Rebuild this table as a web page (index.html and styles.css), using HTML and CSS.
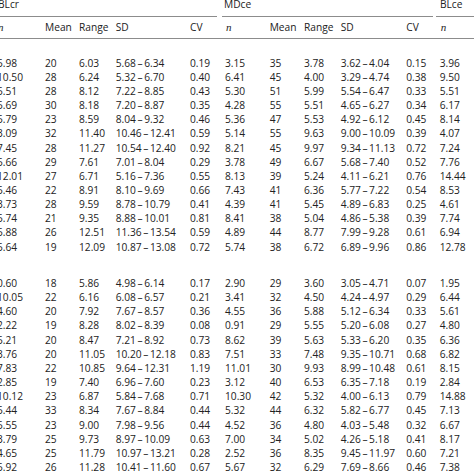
FILE: index.html
```html
<!DOCTYPE html>
<html>
<head>
<meta charset="utf-8">
<link rel="stylesheet" href="styles.css">
</head>
<body>
<div class="table">
  <div class="groups">
    <span class="g g1">BLcr</span>
    <span class="g g2">MDce</span>
    <span class="g g3">BLce</span>
  </div>
  <div class="row heads">
    <span class="it">n</span><span>Mean</span><span>Range</span><span>SD</span><span>CV</span>
    <span class="it">n</span><span>Mean</span><span>Range</span><span>SD</span><span>CV</span>
    <span class="it">n</span>
  </div>
  <div class="body b1">
    <div class="row"><span>5.98</span><span>20</span><span>6.03</span><span>5.68<i>–</i>6.34</span><span>0.19</span><span>3.15</span><span>35</span><span>3.78</span><span>3.62<i>–</i>4.04</span><span>0.15</span><span>3.96</span></div>
    <div class="row"><span>10.50</span><span>28</span><span>6.24</span><span>5.32<i>–</i>6.70</span><span>0.40</span><span>6.41</span><span>45</span><span>4.00</span><span>3.29<i>–</i>4.74</span><span>0.38</span><span>9.50</span></div>
    <div class="row"><span>5.51</span><span>28</span><span>8.12</span><span>7.22<i>–</i>8.85</span><span>0.43</span><span>5.30</span><span>51</span><span>5.99</span><span>5.54<i>–</i>6.47</span><span>0.33</span><span>5.51</span></div>
    <div class="row"><span>5.69</span><span>30</span><span>8.18</span><span>7.20<i>–</i>8.87</span><span>0.35</span><span>4.28</span><span>55</span><span>5.51</span><span>4.65<i>–</i>6.27</span><span>0.34</span><span>6.17</span></div>
    <div class="row"><span>5.79</span><span>23</span><span>8.59</span><span>8.04<i>–</i>9.32</span><span>0.46</span><span>5.36</span><span>47</span><span>5.53</span><span>4.92<i>–</i>6.12</span><span>0.45</span><span>8.14</span></div>
    <div class="row"><span>3.09</span><span>32</span><span>11.40</span><span>10.46<i>–</i>12.41</span><span>0.59</span><span>5.14</span><span>55</span><span>9.63</span><span>9.00<i>–</i>10.09</span><span>0.39</span><span>4.07</span></div>
    <div class="row"><span>7.45</span><span>28</span><span>11.27</span><span>10.54<i>–</i>12.40</span><span>0.92</span><span>8.21</span><span>45</span><span>9.97</span><span>9.34<i>–</i>11.13</span><span>0.72</span><span>7.24</span></div>
    <div class="row"><span>5.66</span><span>29</span><span>7.61</span><span>7.01<i>–</i>8.04</span><span>0.29</span><span>3.78</span><span>49</span><span>6.67</span><span>5.68<i>–</i>7.40</span><span>0.52</span><span>7.76</span></div>
    <div class="row"><span>12.01</span><span>27</span><span>6.71</span><span>5.16<i>–</i>7.36</span><span>0.55</span><span>8.13</span><span>39</span><span>5.24</span><span>4.11<i>–</i>6.21</span><span>0.76</span><span>14.44</span></div>
    <div class="row"><span>5.46</span><span>22</span><span>8.91</span><span>8.10<i>–</i>9.69</span><span>0.66</span><span>7.43</span><span>41</span><span>6.36</span><span>5.77<i>–</i>7.22</span><span>0.54</span><span>8.53</span></div>
    <div class="row"><span>3.73</span><span>28</span><span>9.59</span><span>8.78<i>–</i>10.79</span><span>0.41</span><span>4.39</span><span>41</span><span>5.45</span><span>4.89<i>–</i>6.83</span><span>0.25</span><span>4.61</span></div>
    <div class="row"><span>5.74</span><span>21</span><span>9.35</span><span>8.88<i>–</i>10.01</span><span>0.81</span><span>8.41</span><span>38</span><span>5.04</span><span>4.86<i>–</i>5.38</span><span>0.39</span><span>7.74</span></div>
    <div class="row"><span>5.88</span><span>26</span><span>12.51</span><span>11.36<i>–</i>13.54</span><span>0.59</span><span>4.89</span><span>44</span><span>8.77</span><span>7.99<i>–</i>9.28</span><span>0.61</span><span>6.94</span></div>
    <div class="row"><span>5.64</span><span>19</span><span>12.09</span><span>10.87<i>–</i>13.08</span><span>0.72</span><span>5.74</span><span>38</span><span>6.72</span><span>6.89<i>–</i>9.96</span><span>0.86</span><span>12.78</span></div>
  </div>
  <div class="body b2">
    <div class="row"><span>0.60</span><span>18</span><span>5.86</span><span>4.98<i>–</i>6.14</span><span>0.17</span><span>2.90</span><span>29</span><span>3.60</span><span>3.05<i>–</i>4.71</span><span>0.07</span><span>1.95</span></div>
    <div class="row"><span>10.05</span><span>22</span><span>6.16</span><span>6.08<i>–</i>6.57</span><span>0.21</span><span>3.41</span><span>32</span><span>4.50</span><span>4.24<i>–</i>4.97</span><span>0.29</span><span>6.44</span></div>
    <div class="row"><span>4.60</span><span>20</span><span>7.92</span><span>7.67<i>–</i>8.57</span><span>0.36</span><span>4.55</span><span>36</span><span>5.88</span><span>5.12<i>–</i>6.34</span><span>0.33</span><span>5.61</span></div>
    <div class="row"><span>2.22</span><span>19</span><span>8.28</span><span>8.02<i>–</i>8.39</span><span>0.08</span><span>0.91</span><span>29</span><span>5.55</span><span>5.20<i>–</i>6.08</span><span>0.27</span><span>4.80</span></div>
    <div class="row"><span>5.21</span><span>20</span><span>8.47</span><span>7.21<i>–</i>8.92</span><span>0.73</span><span>8.62</span><span>39</span><span>5.63</span><span>5.33<i>–</i>6.20</span><span>0.35</span><span>6.36</span></div>
    <div class="row"><span>3.76</span><span>20</span><span>11.05</span><span>10.20<i>–</i>12.18</span><span>0.83</span><span>7.51</span><span>33</span><span>7.48</span><span>9.35<i>–</i>10.71</span><span>0.68</span><span>6.82</span></div>
    <div class="row"><span>7.83</span><span>22</span><span>10.85</span><span>9.64<i>–</i>12.31</span><span>1.19</span><span>11.01</span><span>30</span><span>9.93</span><span>8.99<i>–</i>10.48</span><span>0.61</span><span>8.15</span></div>
    <div class="row"><span>2.85</span><span>19</span><span>7.40</span><span>6.96<i>–</i>7.60</span><span>0.23</span><span>3.12</span><span>40</span><span>6.53</span><span>6.35<i>–</i>7.18</span><span>0.19</span><span>2.84</span></div>
    <div class="row"><span>10.12</span><span>23</span><span>6.87</span><span>5.84<i>–</i>7.68</span><span>0.71</span><span>10.30</span><span>42</span><span>5.32</span><span>4.00<i>–</i>6.13</span><span>0.79</span><span>14.88</span></div>
    <div class="row"><span>5.44</span><span>33</span><span>8.34</span><span>7.67<i>–</i>8.84</span><span>0.44</span><span>5.32</span><span>44</span><span>6.32</span><span>5.82<i>–</i>6.77</span><span>0.45</span><span>7.13</span></div>
    <div class="row"><span>5.55</span><span>23</span><span>9.00</span><span>7.98<i>–</i>9.56</span><span>0.44</span><span>4.52</span><span>36</span><span>4.80</span><span>4.03<i>–</i>5.48</span><span>0.32</span><span>6.67</span></div>
    <div class="row"><span>3.79</span><span>25</span><span>9.73</span><span>8.97<i>–</i>10.09</span><span>0.63</span><span>7.00</span><span>34</span><span>5.02</span><span>4.26<i>–</i>5.18</span><span>0.41</span><span>8.17</span></div>
    <div class="row"><span>4.65</span><span>25</span><span>11.79</span><span>10.97<i>–</i>13.21</span><span>0.28</span><span>2.52</span><span>36</span><span>8.35</span><span>9.45<i>–</i>11.97</span><span>0.60</span><span>7.21</span></div>
    <div class="row"><span>5.92</span><span>26</span><span>11.28</span><span>10.41<i>–</i>11.60</span><span>0.67</span><span>5.67</span><span>32</span><span>6.29</span><span>7.69<i>–</i>8.66</span><span>0.46</span><span>7.38</span></div>
  </div>
</div>
</body>
</html>
```
FILE: styles.css
```css
html, body {
  margin: 0;
  padding: 0;
  background: #ffffff;
  overflow: hidden;
}

body {
  font-family: "Open Sans", "Liberation Sans", sans-serif;
  font-size: 10.2px;
  color: #222222;
}

.table {
  width: 480px;
  margin-left: -3px;
}

.groups,
.row {
  display: grid;
  grid-template-columns: 48px 34px 36.7px 74.3px 35px 44.7px 34.3px 36.7px 65.6px 33.4px 40px;
  white-space: nowrap;
}

.groups {
  height: 17px;
}

.g {
  box-sizing: border-box;
  height: 17px;
  line-height: 9px;
  border-bottom: 1px solid #8c8c8c;
}

.g1 {
  grid-column: 1 / 6;
  margin-right: 8px;
  padding-left: 1px;
}

.g2 {
  grid-column: 6 / 11;
  margin-left: -3px;
  margin-right: 6.7px;
  padding-left: 2px;
}

.g3 {
  grid-column: 11 / 12;
  margin-left: -3.7px;
  padding-left: 4px;
}

.heads {
  box-sizing: border-box;
  height: 22px;
  line-height: 20.5px;
  border-bottom: 1px solid #8c8c8c;
}

.it {
  font-family: "Liberation Serif", serif;
  font-style: italic;
  font-size: 11px;
  padding-left: 1px;
}

.body .row {
  line-height: 14.15px;
}

.body .row i {
  font-style: normal;
  margin: 0 1.6px;
}

.b1 {
  padding-top: 16.6px;
}

.b2 {
  padding-top: 22.2px;
}
```
